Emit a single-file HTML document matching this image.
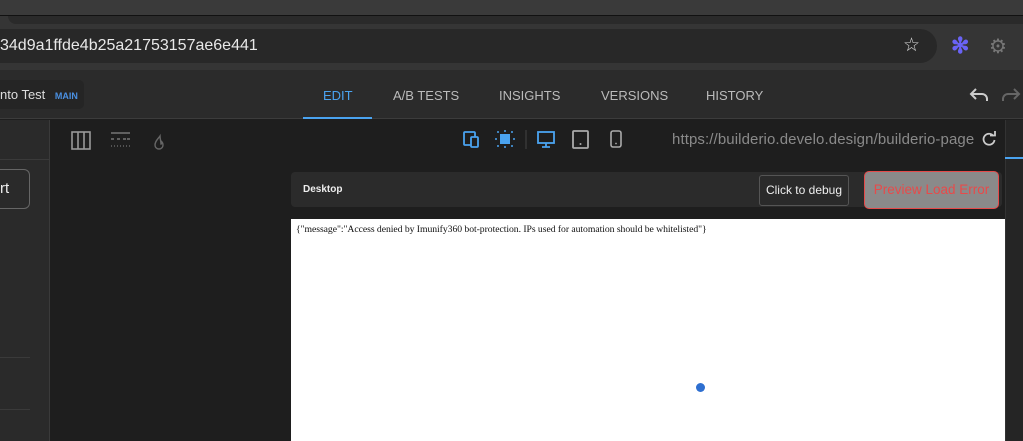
<!DOCTYPE html>
<html><head><style>
*{margin:0;padding:0;box-sizing:border-box}
body{width:1023px;height:441px;overflow:hidden;background:#1e1e1e;font-family:"Liberation Sans",sans-serif;position:relative}
.a{position:absolute}
</style></head><body>
<div class="a" style="left:0;top:0;width:1023px;height:15px;background:#3a3a3a"></div>
<div class="a" style="left:0;top:15px;width:1023px;height:1px;background:#111"></div>
<div class="a" style="left:0;top:16px;width:1023px;height:54px;background:#353535"></div>
<div class="a" style="left:8px;top:16px;width:1015px;height:8px;background:#2a2a2a;border-radius:0 0 0 10px"></div>
<div class="a" style="left:0;top:29px;width:937px;height:34px;background:#282828;border-radius:0 17px 17px 0"></div>
<div class="a" style="left:0;top:37px;font-size:16px;color:#e8e8e8">34d9a1ffde4b25a21753157ae6e441</div>
<div class="a" style="left:903px;top:34px;font-size:19px;color:#ddd">☆</div>
<div class="a" style="left:951px;top:33px;font-size:22px;color:#6a63f5;font-weight:bold">✻</div>
<div class="a" style="left:989px;top:34px;font-size:20px;color:#777">⚙</div>
<div class="a" style="left:0;top:70px;width:1023px;height:49px;background:#2b2b2b;border-bottom:1px solid #3c3c3c"></div>
<div class="a" style="left:0;top:80px;width:84px;height:29px;background:#252525;border-radius:0 5px 5px 0"></div>
<div class="a" style="left:0;top:87px;font-size:13px;color:#ddd">nto Test <span style="color:#4a90e2;font-size:9px;font-weight:bold;margin-left:6px">MAIN</span></div>
<div class="a" style="left:323px;top:88px;font-size:13px;color:#4aa3f0">EDIT</div>
<div class="a" style="left:303px;top:117px;width:69px;height:2px;background:#4aa3f0"></div>
<div class="a" style="left:393px;top:88px;font-size:13px;color:#bbb">A/B TESTS</div>
<div class="a" style="left:499px;top:88px;font-size:13px;color:#bbb">INSIGHTS</div>
<div class="a" style="left:601px;top:88px;font-size:13px;color:#bbb">VERSIONS</div>
<div class="a" style="left:706px;top:88px;font-size:13px;color:#bbb">HISTORY</div>
<svg class="a" style="left:968px;top:85px" width="55" height="20"><path d="M8 4 L3 9 L8 14 M3 9 H14 a5 5 0 0 1 5 5 v2" stroke="#ccc" stroke-width="2" fill="none"/><path d="M46 4 L51 9 L46 14 M51 9 H40 a5 5 0 0 0 -5 5 v2" stroke="#666" stroke-width="2" fill="none"/></svg>
<div class="a" style="left:0;top:120px;width:50px;height:321px;background:#2a2a2a;border-right:1px solid #3a3a3a"></div>
<div class="a" style="left:0;top:159px;width:50px;height:1px;background:#3a3a3a"></div>
<div class="a" style="left:0;top:169px;width:30px;height:40px;border:1px solid #666;border-left:none;border-radius:0 6px 6px 0;color:#eee;font-size:15px;padding:10px 0 0 0">rt</div>
<div class="a" style="left:0;top:357px;width:30px;height:1px;background:#3a3a3a"></div>
<div class="a" style="left:0;top:409px;width:30px;height:1px;background:#3a3a3a"></div>
<svg class="a" style="left:70px;top:130px" width="110" height="22"><rect x="2" y="2" width="18" height="17" stroke="#999" stroke-width="1.6" fill="none"/><path d="M8 2v17M14 2v17" stroke="#999" stroke-width="1.6"/><path d="M41 3h19M41 9h3M47 9h3M53 9h3M57 9h3" stroke="#888" stroke-width="1.2"/><path d="M41 16h19" stroke="#888" stroke-width="1" stroke-dasharray="1 2"/><path d="M90 6c-2 3-5 5-5 9a4 4 0 0 0 8 0c0-2-1-3-1-3c0 2-1 2-1 2c0-3-1-5-1-8z" stroke="#666" stroke-width="1.4" fill="none"/></svg>
<svg class="a" style="left:462px;top:129px" width="170" height="22"><rect x="2" y="3" width="11" height="13" rx="1" stroke="#4aa3f0" stroke-width="1.8" fill="none"/><rect x="9" y="8" width="7" height="10" rx="1" stroke="#4aa3f0" stroke-width="1.8" fill="#1e1e1e"/><rect x="38" y="5" width="10" height="10" fill="#4aa3f0"/><path d="M35 3h2M49 3h2M35 17h2M49 17h2M43 1v2M43 17v2M33 10h2M51 10h2" stroke="#4aa3f0" stroke-width="1.5"/><path d="M64 1v19" stroke="#444"/><rect x="76" y="3" width="16" height="11" stroke="#4aa3f0" stroke-width="1.8" fill="none"/><path d="M80 18h8M84 14v4" stroke="#4aa3f0" stroke-width="1.8"/><rect x="111" y="2" width="15" height="17" rx="1" stroke="#aaa" stroke-width="1.8" fill="none"/><circle cx="118.5" cy="15" r="1" fill="#aaa"/><rect x="149" y="2" width="10" height="16" rx="2" stroke="#aaa" stroke-width="1.6" fill="none"/><circle cx="154" cy="14.5" r="0.9" fill="#aaa"/></svg>
<div class="a" style="left:672px;top:131px;font-size:15px;color:#8a8a8a;letter-spacing:0.1px">https://builderio.develo.design/builderio-page</div>
<svg class="a" style="left:981px;top:131px" width="16" height="16"><path d="M12.5 5A5.5 5.5 0 1 0 13.5 9" stroke="#ccc" stroke-width="1.8" fill="none"/><path d="M9 4.5h5v-5" stroke="#ccc" stroke-width="1.8" fill="none"/></svg>
<div class="a" style="left:1005px;top:120px;width:18px;height:321px;background:#252525;border-left:1px solid #333"></div>
<div class="a" style="left:1005px;top:157px;width:18px;height:2px;background:#4aa3f0"></div>
<div class="a" style="left:291px;top:172px;width:711px;height:35px;background:#2b2b2b;border-radius:4px"></div>
<div class="a" style="left:303px;top:184px;font-size:10px;font-weight:bold;color:#eee">Desktop</div>
<div class="a" style="left:759px;top:175px;width:90px;height:31px;border:1px solid #555;border-radius:3px;background:#2a2a2a;color:#eee;font-size:12px;line-height:29px;text-align:center">Click to debug</div>
<div class="a" style="left:864px;top:171px;width:135px;height:38px;border:1.5px solid #e54a4a;border-radius:5px;background:#8a8a8a;color:#e84a4a;font-size:13.5px;line-height:35px;text-align:center">Preview Load Error</div>
<div class="a" style="left:291px;top:219px;width:714px;height:222px;background:#fff"></div>
<div class="a" style="left:296px;top:224px;font-family:'Liberation Serif',serif;font-size:9.7px;letter-spacing:-0.05px;color:#111">{"message":"Access denied by Imunify360 bot-protection. IPs used for automation should be whitelisted"}</div>
<div class="a" style="left:696px;top:383px;width:9px;height:9px;border-radius:50%;background:#2e6fd0"></div>
</body></html>
